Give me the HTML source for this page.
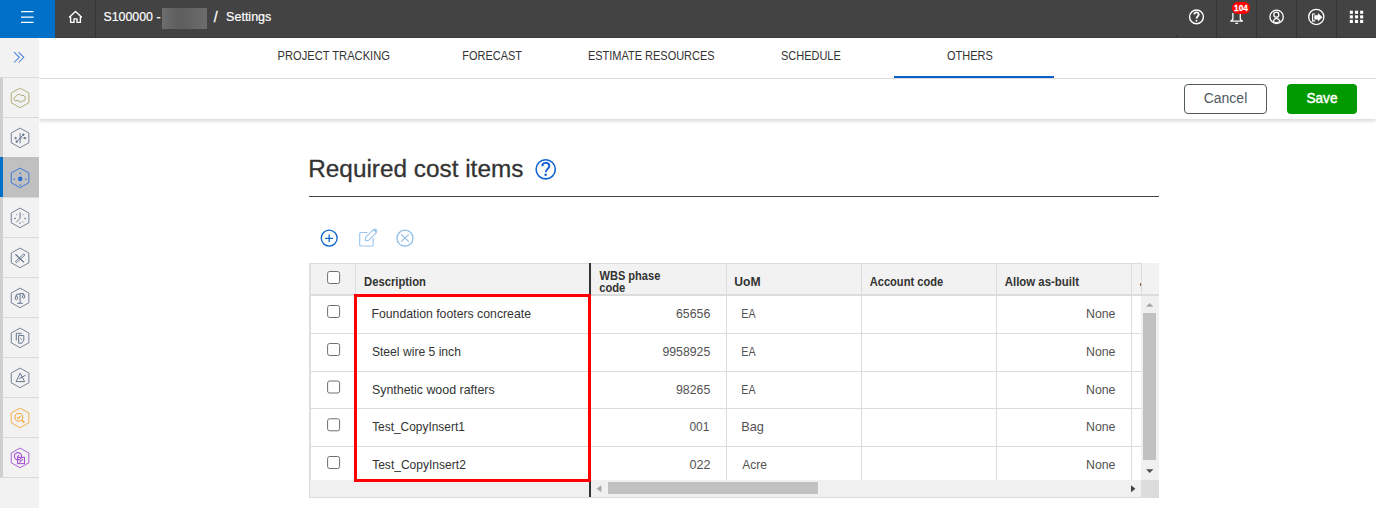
<!DOCTYPE html>
<html><head><meta charset="utf-8">
<style>
html,body{margin:0;padding:0;width:1376px;height:508px;overflow:hidden;background:#fff;font-family:"Liberation Sans",sans-serif;}
.a{position:absolute;box-sizing:border-box;}
#ov{position:absolute;left:0;top:0;width:1376px;height:508px;font-family:"Liberation Sans",sans-serif;}
</style></head><body>
<!-- top header -->
<div class="a" style="left:0;top:0;width:1376px;height:38px;background:#434343;border-bottom:1px solid #3a3a3a"></div>
<div class="a" style="left:0;top:0;width:55px;height:38px;background:#0070c8"></div>
<div class="a" style="left:95px;top:0;width:1px;height:38px;background:#353535"></div>
<div class="a" style="left:1216px;top:0;width:1px;height:38px;background:#353535"></div>
<div class="a" style="left:1256px;top:0;width:1px;height:38px;background:#353535"></div>
<div class="a" style="left:1296px;top:0;width:1px;height:38px;background:#353535"></div>
<div class="a" style="left:1336px;top:0;width:1px;height:38px;background:#353535"></div>
<div class="a" style="left:1176px;top:35px;width:1px;height:3px;background:#353535"></div>
<!-- blurred project name -->
<div class="a" style="left:162px;top:8px;width:45px;height:21px;background:linear-gradient(90deg,#6e6e6e 0%,#5e5e5e 35%,#626262 60%,#6c6c6c 100%);filter:blur(0.6px)"></div>

<!-- action bar shadow -->
<div class="a" style="left:39px;top:79px;width:1337px;height:40px;background:#fff;box-shadow:0 2px 4px rgba(0,0,0,0.16)"></div>
<!-- sidebar -->
<div class="a" style="left:0;top:38px;width:39px;height:470px;background:#f2f2f2"></div>
<div class="a" style="left:0;top:77px;width:39px;height:1px;background:#d9d9d9"></div>
<div class="a" style="left:0;top:78px;width:3px;height:399px;background:#cfcfcf"></div>
<div class="a" style="left:3px;top:117px;width:36px;height:1px;background:#d9d9d9"></div>
<div class="a" style="left:3px;top:157px;width:36px;height:40px;background:#c0c0c0"></div>
<div class="a" style="left:0;top:157px;width:3px;height:40px;background:#0070c8"></div>
<div class="a" style="left:3px;top:197px;width:36px;height:1px;background:#d9d9d9"></div>
<div class="a" style="left:3px;top:237px;width:36px;height:1px;background:#d9d9d9"></div>
<div class="a" style="left:3px;top:277px;width:36px;height:1px;background:#d9d9d9"></div>
<div class="a" style="left:3px;top:317px;width:36px;height:1px;background:#d9d9d9"></div>
<div class="a" style="left:3px;top:357px;width:36px;height:1px;background:#d9d9d9"></div>
<div class="a" style="left:3px;top:397px;width:36px;height:1px;background:#d9d9d9"></div>
<div class="a" style="left:3px;top:437px;width:36px;height:1px;background:#d9d9d9"></div>
<div class="a" style="left:0;top:477px;width:39px;height:1px;background:#d9d9d9"></div>

<!-- tabs bar -->
<div class="a" style="left:39px;top:78px;width:1337px;height:1px;background:#dcdcdc"></div>
<div class="a" style="left:894px;top:76px;width:160px;height:2px;background:#0a5fcc"></div>
<!-- buttons -->
<div class="a" style="left:1184px;top:84px;width:83px;height:30px;border:1px solid #505a5e;border-radius:4px;background:#fff"></div>
<div class="a" style="left:1287px;top:84px;width:70px;height:30px;border-radius:4px;background:#009a00"></div>

<!-- heading rule -->
<div class="a" style="left:309px;top:196px;width:850px;height:1px;background:#444"></div>

<!-- table -->
<div class="a" style="left:309px;top:263px;width:833px;height:1px;background:#dcdcdc"></div>
<div class="a" style="left:309px;top:264px;width:2px;height:216px;background:#dedede"></div>
<div class="a" style="left:311px;top:264px;width:830px;height:30px;background:#f2f2f2"></div>
<div class="a" style="left:1141px;top:263px;width:1px;height:31px;background:#dcdcdc"></div>
<div class="a" style="left:1142px;top:263px;width:17px;height:31px;background:#f2f2f2"></div>
<div class="a" style="left:311px;top:294px;width:848px;height:2px;background:#dcdcdc"></div>
<!-- column dividers -->
<div class="a" style="left:355px;top:264px;width:1px;height:216px;background:#dcdcdc"></div>
<div class="a" style="left:726px;top:264px;width:1px;height:216px;background:#dcdcdc"></div>
<div class="a" style="left:861px;top:264px;width:1px;height:216px;background:#dcdcdc"></div>
<div class="a" style="left:996px;top:264px;width:1px;height:216px;background:#dcdcdc"></div>
<div class="a" style="left:1131px;top:264px;width:1px;height:216px;background:#dcdcdc"></div>
<!-- row dividers -->
<div class="a" style="left:310px;top:333px;width:831px;height:1px;background:#dcdcdc"></div>
<div class="a" style="left:310px;top:371px;width:831px;height:1px;background:#dcdcdc"></div>
<div class="a" style="left:310px;top:408px;width:831px;height:1px;background:#dcdcdc"></div>
<div class="a" style="left:310px;top:446px;width:831px;height:1px;background:#dcdcdc"></div>
<!-- bottom scroll area -->
<div class="a" style="left:309px;top:480px;width:850px;height:18px;background:#f0f0f0;border-left:1px solid #dcdcdc;border-bottom:1px solid #dcdcdc"></div>
<div class="a" style="left:608px;top:482px;width:210px;height:12px;background:#c1c1c1"></div>
<div class="a" style="left:1141px;top:480px;width:18px;height:17px;background:#dcdcdc"></div>
<!-- vertical scroll -->
<div class="a" style="left:1141px;top:296px;width:18px;height:184px;background:#f0f0f0"></div>
<div class="a" style="left:1143px;top:313px;width:13px;height:147px;background:#c1c1c1"></div>
<!-- frozen divider -->
<div class="a" style="left:589px;top:263px;width:2px;height:234px;background:#333"></div>
<!-- red highlight -->
<div class="a" style="left:354px;top:294px;width:237px;height:188px;border:3px solid #f00"></div>

<svg id="ov" width="1376" height="508" viewBox="0 0 1376 508">
<g font-family="Liberation Sans, sans-serif">
<text transform="translate(103.51,21.00) scale(0.9168,1)" font-size="13.48" font-weight="400" fill="#fff" stroke="#fff" stroke-width="0.2">S100000 -</text>
<text transform="translate(213.80,21.60) scale(0.9500,1)" font-size="14.78" font-weight="400" fill="#fff" stroke="#fff" stroke-width="0.3">/</text>
<text transform="translate(226.10,21.00) scale(0.9297,1)" font-size="13.48" font-weight="400" fill="#fff" stroke="#fff" stroke-width="0.2">Settings</text>
<text transform="translate(277.61,60.20) scale(0.8548,1)" font-size="13.04" font-weight="400" fill="#333">PROJECT TRACKING</text>
<text transform="translate(462.32,60.20) scale(0.8407,1)" font-size="13.04" font-weight="400" fill="#333">FORECAST</text>
<text transform="translate(587.92,60.20) scale(0.8431,1)" font-size="13.04" font-weight="400" fill="#333">ESTIMATE RESOURCES</text>
<text transform="translate(780.96,60.20) scale(0.8425,1)" font-size="13.04" font-weight="400" fill="#333">SCHEDULE</text>
<text transform="translate(946.96,60.20) scale(0.8435,1)" font-size="13.04" font-weight="400" fill="#333">OTHERS</text>
<text transform="translate(1203.70,103.00) scale(0.9198,1)" font-size="15.22" font-weight="400" fill="#4f5a5e">Cancel</text>
<text transform="translate(1306.46,103.00) scale(0.8948,1)" font-size="15.22" font-weight="400" fill="#fff" stroke="#fff" stroke-width="0.45">Save</text>
<text transform="translate(308.25,177.00) scale(1.0065,1)" font-size="24.20" font-weight="400" fill="#333" stroke="#333" stroke-width="0.3">Required cost items</text>
<text transform="translate(364.02,286.30) scale(0.8478,1)" font-size="13.29" font-weight="700" fill="#333">Description</text>
<text transform="translate(599.50,280.10) scale(0.8595,1)" font-size="12.86" font-weight="700" fill="#333">WBS phase</text>
<text transform="translate(599.16,292.00) scale(0.8700,1)" font-size="12.86" font-weight="700" fill="#333">code</text>
<text transform="translate(734.27,286.30) scale(0.9137,1)" font-size="13.29" font-weight="700" fill="#333">UoM</text>
<text transform="translate(869.68,286.30) scale(0.8369,1)" font-size="13.29" font-weight="700" fill="#333">Account code</text>
<text transform="translate(1004.77,286.30) scale(0.8600,1)" font-size="13.29" font-weight="700" fill="#333">Allow as-built</text>
<text transform="translate(371.42,318.00) scale(0.9634,1)" font-size="12.75" font-weight="400" fill="#333">Foundation footers concreate</text>
<text transform="translate(675.88,318.00) scale(0.9719,1)" font-size="12.75" font-weight="400" fill="#525252">65656</text>
<text transform="translate(741.35,318.00) scale(0.8359,1)" font-size="12.75" font-weight="400" fill="#525252">EA</text>
<text transform="translate(1086.02,318.00) scale(0.9653,1)" font-size="12.75" font-weight="400" fill="#525252">None</text>
<text transform="translate(371.91,356.00) scale(0.9529,1)" font-size="12.75" font-weight="400" fill="#333">Steel wire 5 inch</text>
<text transform="translate(662.41,356.00) scale(0.9655,1)" font-size="12.75" font-weight="400" fill="#525252">9958925</text>
<text transform="translate(741.35,356.00) scale(0.8359,1)" font-size="12.75" font-weight="400" fill="#525252">EA</text>
<text transform="translate(1086.02,356.00) scale(0.9653,1)" font-size="12.75" font-weight="400" fill="#525252">None</text>
<text transform="translate(371.90,393.50) scale(0.9738,1)" font-size="12.75" font-weight="400" fill="#333">Synthetic wood rafters</text>
<text transform="translate(676.01,393.50) scale(0.9683,1)" font-size="12.75" font-weight="400" fill="#525252">98265</text>
<text transform="translate(741.35,393.50) scale(0.8359,1)" font-size="12.75" font-weight="400" fill="#525252">EA</text>
<text transform="translate(1086.02,393.50) scale(0.9653,1)" font-size="12.75" font-weight="400" fill="#525252">None</text>
<text transform="translate(372.16,431.40) scale(0.9349,1)" font-size="12.75" font-weight="400" fill="#333">Test_CopyInsert1</text>
<text transform="translate(689.44,431.40) scale(0.9405,1)" font-size="12.75" font-weight="400" fill="#525252">001</text>
<text transform="translate(741.18,431.40) scale(1.0021,1)" font-size="12.75" font-weight="400" fill="#525252">Bag</text>
<text transform="translate(1086.02,431.40) scale(0.9653,1)" font-size="12.75" font-weight="400" fill="#525252">None</text>
<text transform="translate(372.16,469.00) scale(0.9451,1)" font-size="12.75" font-weight="400" fill="#333">Test_CopyInsert2</text>
<text transform="translate(689.42,469.00) scale(0.9947,1)" font-size="12.75" font-weight="400" fill="#525252">022</text>
<text transform="translate(742.20,469.00) scale(0.9394,1)" font-size="12.75" font-weight="400" fill="#525252">Acre</text>
<text transform="translate(1086.02,469.00) scale(0.9653,1)" font-size="12.75" font-weight="400" fill="#525252">None</text>
</g>
<g fill="#fff"><rect x="21" y="11" width="12.6" height="1.25"/><rect x="21" y="16.5" width="12.6" height="1.25"/><rect x="21" y="21.75" width="12.6" height="1.25"/></g>
<path d="M69.5,17 L75.5,11.4 L81.5,17 M70.6,16 V22.4 H74 V18.8 H77 V22.4 H80.4 V16" fill="none" stroke="#fff" stroke-width="1.35" stroke-linejoin="round" stroke-linecap="round"/>
<circle cx="1196.5" cy="16.9" r="6.9" fill="none" stroke="#fff" stroke-width="1.4"/>
<path d="M1194.3,14.6 C1194.3,11.6 1198.7,11.6 1198.7,14.4 C1198.7,16.2 1196.5,16.4 1196.5,18.6" fill="none" stroke="#fff" stroke-width="1.8"/><circle cx="1196.5" cy="20.7" r="0.95" fill="#fff"/>
<path d="M1232.9,13 V19.2 L1230.8,21.2 H1242.4 L1240.3,19.2 V13" fill="none" stroke="#fff" stroke-width="1.3" stroke-linejoin="round"/>
<path d="M1235.2,22.8 H1238.2 V23.4 Q1236.7,24.8 1235.2,23.4 Z" fill="#fff"/>
<rect x="1231.9" y="2" width="18.2" height="12" rx="6" fill="#f00"/>
<text x="1241" y="11.2" font-size="9.8" font-weight="700" fill="#fff" stroke="#fff" stroke-width="0.3" text-anchor="middle" transform="translate(1241,0) scale(0.84,1) translate(-1241,0)">104</text>
<circle cx="1276.6" cy="16.9" r="6.7" fill="none" stroke="#fff" stroke-width="1.3"/>
<circle cx="1276.3" cy="14.7" r="2.5" fill="none" stroke="#fff" stroke-width="1.3"/>
<path d="M1272.9,21.2 Q1276.5,15.6 1280.1,21.2 Q1276.5,23.8 1272.9,21.2 Z" fill="none" stroke="#fff" stroke-width="1.2" stroke-linejoin="round"/>
<circle cx="1316.3" cy="16.95" r="7.6" fill="none" stroke="#fff" stroke-width="1.3"/>
<path d="M1315.2,14 H1312.6 V20.9 H1315.2" fill="none" stroke="#fff" stroke-width="1.2"/>
<path d="M1314.3,15.2 H1317.9 V13 L1322.5,17.2 L1317.9,21.5 V19.4 H1314.3 Z" fill="#fff"/>
<g fill="#fff"><rect x="1349.80" y="10.70" width="3.1" height="3.1"/><rect x="1349.80" y="15.30" width="3.1" height="3.1"/><rect x="1349.80" y="19.90" width="3.1" height="3.1"/><rect x="1354.95" y="10.70" width="3.1" height="3.1"/><rect x="1354.95" y="15.30" width="3.1" height="3.1"/><rect x="1354.95" y="19.90" width="3.1" height="3.1"/><rect x="1360.10" y="10.70" width="3.1" height="3.1"/><rect x="1360.10" y="15.30" width="3.1" height="3.1"/><rect x="1360.10" y="19.90" width="3.1" height="3.1"/></g>
<path d="M14.1,52.1 L19.3,57.3 L14.1,62.5 M18.6,52.1 L23.8,57.3 L18.6,62.5" fill="none" stroke="#4a80d8" stroke-width="1.05"/>
<path d="M20.06,88.10 L28.86,93.00 L28.86,102.80 L20.06,107.70 L11.26,102.80 L11.26,93.00 Z" fill="none" stroke="#a9a86e" stroke-width="0.9" stroke-linejoin="round"/>
<path transform="translate(6,84)" d="M9.2,16.6 C7.6,16.4 7.6,13.0 9.8,12.6 C10.6,10.4 13.8,9.6 15.4,11.4 C17.6,10.8 19.8,12.4 19.2,14.6 C19.6,16.4 18.0,17.2 16.6,16.8 L14.6,18.3 L13.0,16.8 Z" fill="none" stroke="#a9a86e" stroke-width="1"/>
<path d="M20.06,128.10 L28.86,133.00 L28.86,142.80 L20.06,147.70 L11.26,142.80 L11.26,133.00 Z" fill="none" stroke="#66768f" stroke-width="0.9" stroke-linejoin="round"/>
<g transform="translate(6,124)" stroke="#66768f" fill="#66768f"><path d="M14.1,9.2 V19.2 M10.8,17.6 L17.4,10.7" stroke-width="1" fill="none"/><path d="M14.1,14.1 H19" stroke-width="0.5" fill="none"/><circle cx="9.6" cy="14.1" r="0.75"/><circle cx="19" cy="14.1" r="0.75"/><circle cx="17.4" cy="10.7" r="0.75"/><circle cx="10.7" cy="17.6" r="0.75"/></g>
<path d="M20.06,168.10 L28.86,173.00 L28.86,182.80 L20.06,187.70 L11.26,182.80 L11.26,173.00 Z" fill="none" stroke="#2f6fda" stroke-width="0.9" stroke-linejoin="round"/>
<g transform="translate(6,164)" fill="#2f6fda"><circle cx="14.2" cy="14.9" r="2.3"/><circle cx="14.3" cy="9.4" r="0.8"/><circle cx="8.3" cy="15.3" r="0.8"/><circle cx="19.8" cy="15.3" r="0.8"/><circle cx="14.3" cy="21" r="0.8"/></g>
<path d="M20.06,208.10 L28.86,213.00 L28.86,222.80 L20.06,227.70 L11.26,222.80 L11.26,213.00 Z" fill="none" stroke="#66768f" stroke-width="0.9" stroke-linejoin="round"/>
<g transform="translate(6,204)" stroke="#66768f" fill="none" stroke-width="1"><path d="M14.1,8.4 V14.4 L10.4,18.2"/><path d="M8.2,14.4 H10 M18.3,14.4 H20 M10.2,10.4 L11,11.2 M17.5,10.4 L16.7,11.2 M17.6,18.4 L16.6,17.4 M14,18.4 V20"/></g>
<path d="M20.06,248.10 L28.86,253.00 L28.86,262.80 L20.06,267.70 L11.26,262.80 L11.26,253.00 Z" fill="none" stroke="#66768f" stroke-width="0.9" stroke-linejoin="round"/>
<g transform="translate(6,244)" stroke="#66768f" fill="none" stroke-width="1.2"><path d="M9.4,10.2 L18,18.4"/><path d="M9.4,17.6 L17.8,9.8 L18.9,11 L10.6,18.6 Z" stroke-width="0.9"/></g>
<path d="M20.06,288.10 L28.86,293.00 L28.86,302.80 L20.06,307.70 L11.26,302.80 L11.26,293.00 Z" fill="none" stroke="#66768f" stroke-width="0.9" stroke-linejoin="round"/>
<g transform="translate(6,284)" stroke="#66768f" fill="none" stroke-width="1"><path d="M14.1,9.6 V19.2 M11.2,19.3 H16.8 M10.4,10.4 L14.1,9.8 L17.6,9.4"/><path d="M10.4,10.8 L9,14.8 Q10.4,16.6 11.8,14.8 Z M17.6,9.8 L16.2,13.2 Q17.6,15 19,13.2 Z"/></g>
<path d="M20.06,328.10 L28.86,333.00 L28.86,342.80 L20.06,347.70 L11.26,342.80 L11.26,333.00 Z" fill="none" stroke="#66768f" stroke-width="0.9" stroke-linejoin="round"/>
<g transform="translate(6,324)" stroke="#66768f" fill="none" stroke-width="1"><path d="M10.3,16.3 V9.3 H15.8"/><path d="M12.6,11.4 H17.8 V16.2 L15.8,19.2 H12.6 Z"/><path d="M14.4,14.4 L15.8,15.8"/></g>
<path d="M20.06,368.10 L28.86,373.00 L28.86,382.80 L20.06,387.70 L11.26,382.80 L11.26,373.00 Z" fill="none" stroke="#66768f" stroke-width="0.9" stroke-linejoin="round"/>
<g transform="translate(6,364)" stroke="#66768f" fill="none" stroke-width="1"><path d="M14.2,9.2 L10.1,17.6 H18.6 Z"/><path d="M13.1,14.8 L19.6,11.2"/></g>
<path d="M20.06,408.10 L28.86,413.00 L28.86,422.80 L20.06,427.70 L11.26,422.80 L11.26,413.00 Z" fill="none" stroke="#f7a83e" stroke-width="0.9" stroke-linejoin="round"/>
<g transform="translate(6,404)" stroke="#f7a83e" fill="none" stroke-width="1.1"><circle cx="12.8" cy="13.2" r="3.9"/><path d="M15.6,16 L18.4,18.8" stroke-width="1.6"/><path d="M11,13.4 L12.4,14.6 L14.6,12"/></g>
<path d="M20.06,448.10 L28.86,453.00 L28.86,462.80 L20.06,467.70 L11.26,462.80 L11.26,453.00 Z" fill="none" stroke="#a552d2" stroke-width="0.9" stroke-linejoin="round"/>
<g transform="translate(6,444)" stroke="#a552d2" fill="none" stroke-width="1.1"><circle cx="12" cy="12.2" r="3.6"/><path d="M11,13.4 L13,11"/><rect x="11.6" y="13.4" width="6.9" height="6.2"/><path d="M13.4,18.3 L16.8,15.2"/></g>
<circle cx="545.7" cy="169.3" r="9.6" fill="none" stroke="#1262d0" stroke-width="1.6"/>
<path d="M542.3,166.2 C542.3,161.8 549.3,161.8 549.3,166 C549.3,168.8 545.8,169 545.8,172.2" fill="none" stroke="#1262d0" stroke-width="2.0"/><circle cx="545.6" cy="174.8" r="1.25" fill="#1262d0"/>
<circle cx="329.2" cy="238.1" r="7.95" fill="none" stroke="#0b63ce" stroke-width="1.3"/>
<path d="M325.2,238.3 H333 M329.2,234.6 V242" stroke="#0b63ce" stroke-width="1.3"/>
<path d="M367.6,232.5 H360.6 Q359.7,232.5 359.7,233.4 V245.1 Q359.7,246 360.6,246 H372.3 Q373.2,246 373.2,245.1 V238" fill="none" stroke="#9ec5ee" stroke-width="1.2"/>
<path d="M365.4,240.6 L365.6,237.4 L373.4,229.6 L376.4,232.6 L368.6,240.4 Z" fill="none" stroke="#9ec5ee" stroke-width="1.2" stroke-linejoin="round"/><path d="M373.4,229.6 L374.4,228.8 Q375.2,228.2 376,229 L377,230 Q377.6,230.8 376.9,231.6 L376.4,232.6 Z" fill="#9ec5ee"/>
<circle cx="405" cy="238.2" r="8" fill="none" stroke="#8fbde9" stroke-width="1.3"/>
<path d="M401.2,234.4 L408.8,241.6 M408.8,234.4 L401.2,241.6" stroke="#8fbde9" stroke-width="1.2"/>
<rect x="327.6" y="271.5" width="12" height="12" rx="2" fill="#fff" stroke="#6e6e6e" stroke-width="1"/>
<rect x="327.6" y="305.5" width="12" height="12" rx="2" fill="#fff" stroke="#6e6e6e" stroke-width="1"/>
<rect x="327.6" y="343.5" width="12" height="12" rx="2" fill="#fff" stroke="#6e6e6e" stroke-width="1"/>
<rect x="327.6" y="381.0" width="12" height="12" rx="2" fill="#fff" stroke="#6e6e6e" stroke-width="1"/>
<rect x="327.6" y="418.8" width="12" height="12" rx="2" fill="#fff" stroke="#6e6e6e" stroke-width="1"/>
<rect x="327.6" y="456.5" width="12" height="12" rx="2" fill="#fff" stroke="#6e6e6e" stroke-width="1"/>
<rect x="1140" y="283.2" width="1.1" height="2.6" fill="#8a4a20"/>
<path d="M1146,306.8 L1149.7,303 L1153.4,306.8 Z" fill="#a6a6a6"/>
<path d="M1146,469.2 L1149.7,473 L1153.4,469.2 Z" fill="#505050"/>
<path d="M601.4,485.2 L596.6,488.7 L601.4,492.2 Z" fill="#a6a6a6"/>
<path d="M1131,485.2 L1135.4,488.7 L1131,492.2 Z" fill="#404040"/>
</svg>
</body></html>
